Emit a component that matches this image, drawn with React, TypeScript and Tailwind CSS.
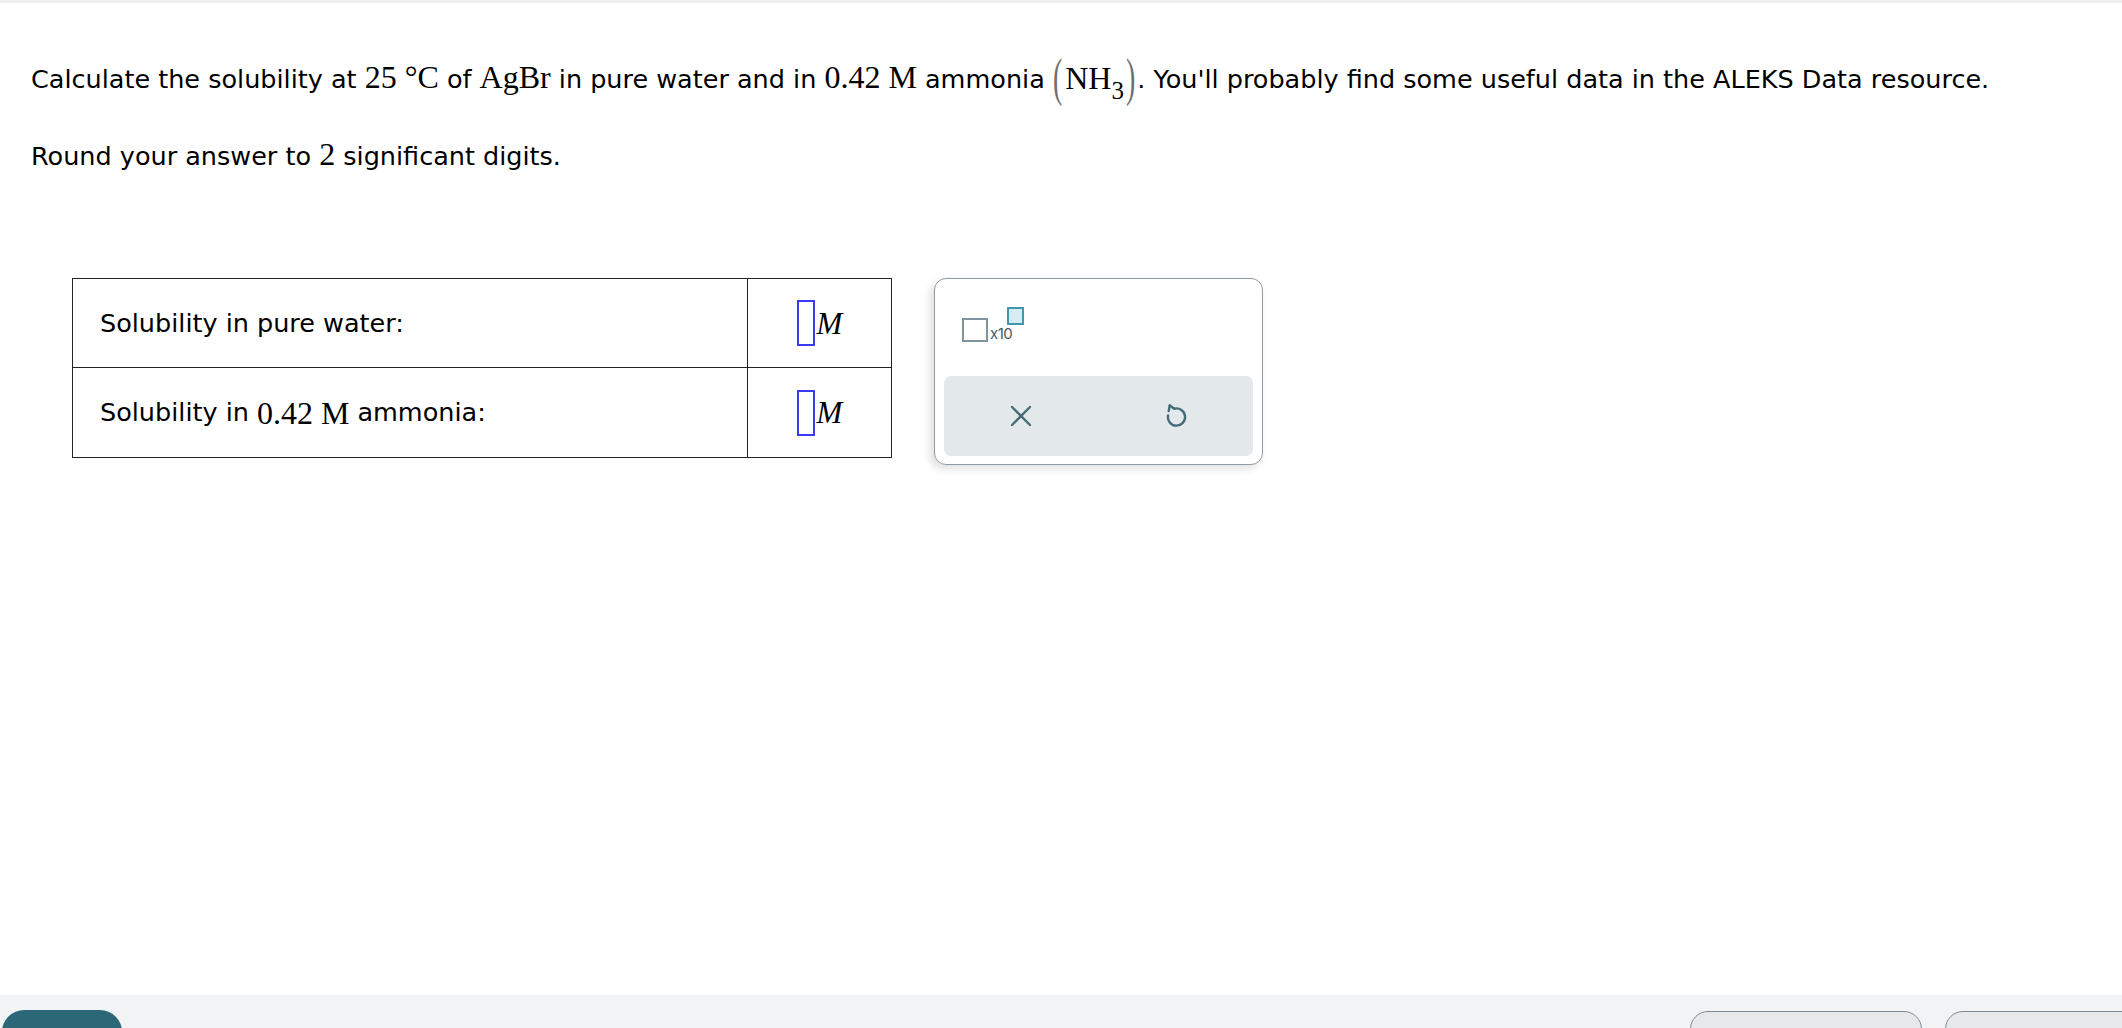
import React from "react";

const serif = "font-['Liberation_Serif','Times_New_Roman',serif]";

function InputBox() {
  return (
    <div className="flex items-center justify-center">
      <div className="w-[18px] h-[46px] border-2 border-[#3a3af0]" />
      <span className={`${serif} italic text-[31px] leading-none text-black ml-[2px]`}>M</span>
    </div>
  );
}

function UndoIcon() {
  return (
    <svg width="26" height="28" viewBox="0 0 24 26" fill="none" stroke="#456b78" strokeWidth="2.2" strokeLinecap="round" strokeLinejoin="round">
      <path d="M10.5 6.2 A8 8 0 1 1 4.6 12.5" />
      <path d="M10.5 6.2 L6.2 3.2" />
      <path d="M6.2 3.2 L5.2 8.4" />
    </svg>
  );
}

export default function App() {
  return (
    <div className="h-screen w-full overflow-hidden flex flex-col bg-white text-black font-['DejaVu_Sans','Verdana',sans-serif]">
      <div className="h-[3px] bg-[#eeeeee] shrink-0" />
      <div className="flex-1 pl-[31px] pt-[52px]">
        <p className="text-[25.5px] leading-[48px] whitespace-nowrap">
          Calculate the solubility at <span className={`${serif} text-[32px] leading-none`}>25 °C</span> of{" "}
          <span className={`${serif} text-[32px] leading-none`}>AgBr</span> in pure water and in{" "}
          <span className={`${serif} text-[32px] leading-none`}>0.42 M</span> ammonia{" "}
          <span className={`${serif} text-[32px] inline-flex items-center align-middle h-[44px] relative top-[-3px] mr-[2px]`}>
            <span className="inline-block scale-y-190 text-[#6f6f6f] text-[28px] leading-none relative top-[0px] mr-[3px]">(</span>
            <span className="leading-none">NH</span>
            <span className="text-[25px] leading-none relative top-[12px]">3</span>
            <span className="inline-block scale-y-190 text-[#6f6f6f] text-[28px] leading-none relative top-[0px] ml-[2px]">)</span>
          </span>
          . You'll probably find some useful data in the ALEKS Data resource.
        </p>
        <p className="text-[25.5px] leading-[48px] mt-[29px]">
          Round your answer to <span className={`${serif} text-[32px] leading-none`}>2</span> significant digits.
        </p>

        <div className="flex items-start mt-[98px] ml-[41px] gap-[42px]">
          <div className="w-[820px] border border-[#222] text-[25.5px]">
            <div className="flex h-[89px] border-b border-[#222]">
              <div className="w-[675px] border-r border-[#222] flex items-center pl-[27px]">
                Solubility in pure water:
              </div>
              <div className="flex-1 flex items-center justify-center">
                <InputBox />
              </div>
            </div>
            <div className="flex h-[89px]">
              <div className="w-[675px] border-r border-[#222] flex items-center pl-[27px]">
                Solubility in <span className={`${serif} text-[32px] mx-[8px]`}>0.42 M</span> ammonia:
              </div>
              <div className="flex-1 flex items-center justify-center">
                <InputBox />
              </div>
            </div>
          </div>

          <div className="w-[329px] h-[187px] border border-[#8d9da5] rounded-[12px] bg-white shadow-[-4px_4px_8px_rgba(0,0,0,0.12)] flex flex-col px-[9px] pb-[8px]">
            <div className="h-[97px] relative">
              <div className="absolute left-[18px] top-[39px] w-[26px] h-[24px] border-2 border-[#7f959f]" />
              <span className="absolute left-[46px] top-[47px] text-[15px] leading-none text-[#4a5a62] font-['Inter','Liberation_Sans',sans-serif] tracking-[-0.5px]">
                x10
              </span>
              <div className="absolute left-[63px] top-[28px] w-[17px] h-[18px] border-2 border-[#3f97b0] bg-[#d5eef4]" />
            </div>
            <div className="flex-1 bg-[#e3e8eb] rounded-[7px] flex items-center">
              <div className="flex-1 flex justify-center">
                <svg width="24" height="24" viewBox="0 0 24 24" fill="none" stroke="#456b78" strokeWidth="2.4" strokeLinecap="round">
                  <path d="M3 3 L21 21" />
                  <path d="M21 3 L3 21" />
                </svg>
              </div>
              <div className="flex-1 flex justify-center">
                <UndoIcon />
              </div>
            </div>
          </div>
        </div>
      </div>

      <div className="h-[33px] shrink-0 overflow-hidden flex flex-col">
        <div className="h-[7px] bg-[#d4dbdf]" />
        <div className="flex-1 bg-[#f1f3f4] relative flex items-start pt-[15px]">
          <div className="ml-[2px] w-[120px] h-[40px] bg-[#2c6778] rounded-t-[22px]" />
          <div className="flex-1" />
          <div className="w-[232px] h-[40px] bg-[#e6e9eb] border border-[#7c8b92] rounded-t-[18px] mt-[1px]" />
          <div className="w-[200px] h-[40px] bg-[#e6e9eb] border border-[#7c8b92] rounded-t-[18px] mt-[1px] ml-[23px] mr-[-23px]" />
        </div>
      </div>
    </div>
  );
}
